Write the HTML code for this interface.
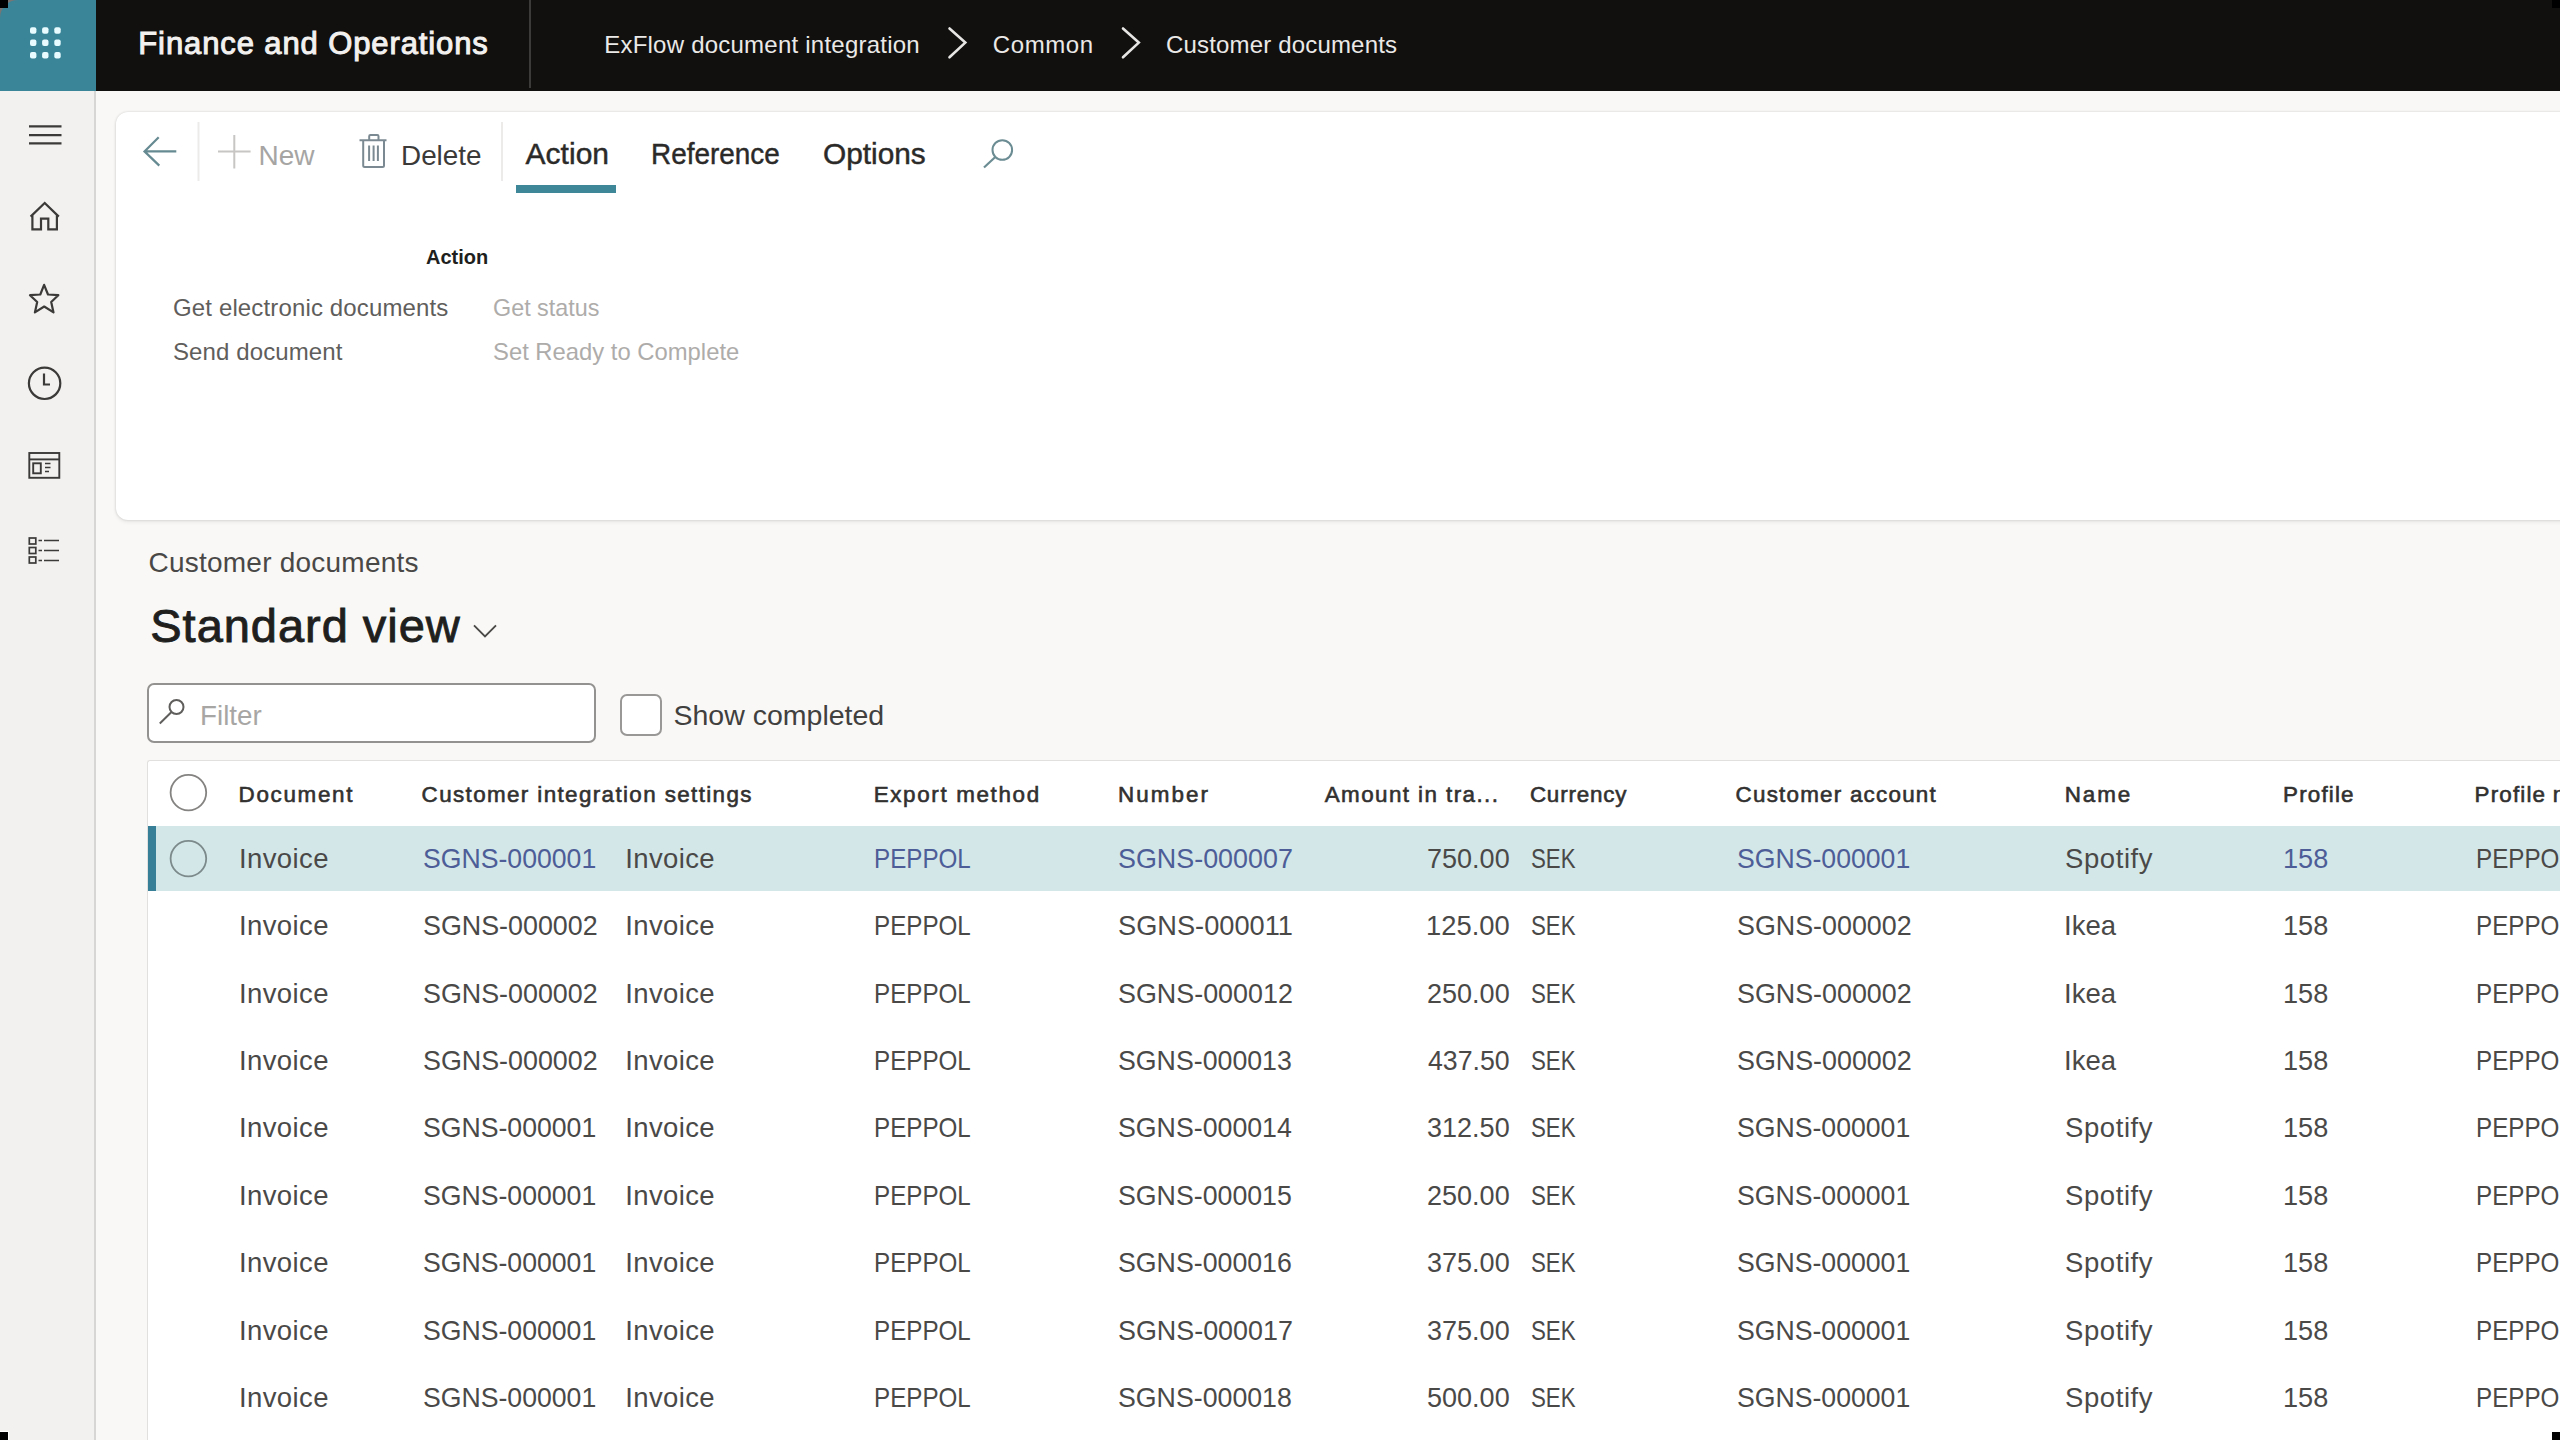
<!DOCTYPE html>
<html><head><meta charset="utf-8"><title>Customer documents</title>
<style>
html,body{margin:0;padding:0;width:2560px;height:1440px;overflow:hidden;background:#f9f8f6;font-family:"Liberation Sans",sans-serif;}
.a{position:absolute;}
.t{position:absolute;white-space:nowrap;line-height:1;transform-origin:0 0;font-family:"Liberation Sans",sans-serif;}
svg{position:absolute;overflow:visible;}
</style></head><body>
<!-- header -->
<div class="a" style="left:0;top:0;width:2560px;height:91px;background:#11100f"></div>
<div class="a" style="left:0;top:0;width:20px;height:20px;background:#7a7572"></div>
<div class="a" style="left:0;top:0;width:96px;height:91px;background:#3b8599;border-top-left-radius:18px"></div>
<svg style="left:0;top:0" width="96" height="91">
 <g fill="#e8fcff">
  <rect x="30" y="27.3" width="6.4" height="6.4" rx="2"/><rect x="42.1" y="27.3" width="6.4" height="6.4" rx="2"/><rect x="54.3" y="27.3" width="6.4" height="6.4" rx="2"/>
  <rect x="30" y="39.5" width="6.4" height="6.4" rx="2"/><rect x="42.1" y="39.5" width="6.4" height="6.4" rx="2"/><rect x="54.3" y="39.5" width="6.4" height="6.4" rx="2"/>
  <rect x="30" y="52" width="6.4" height="6.4" rx="2"/><rect x="42.1" y="52" width="6.4" height="6.4" rx="2"/><rect x="54.3" y="52" width="6.4" height="6.4" rx="2"/>
 </g>
</svg>
<div class="a" style="left:529px;top:0;width:2px;height:88px;background:#3c3b3a"></div>
<svg style="left:0;top:0" width="2560" height="91">
 <polyline points="949.5,28.5 965.3,42.6 949.5,57.3" fill="none" stroke="#e8e6e4" stroke-width="2.6" stroke-linecap="round"/>
 <polyline points="1123,28.5 1138.8,42.6 1123,57.3" fill="none" stroke="#e8e6e4" stroke-width="2.6" stroke-linecap="round"/>
</svg>
<!-- nav -->
<div class="a" style="left:0;top:91px;width:94px;height:1349px;background:#f2f1ef;border-right:2px solid #d8d6d4"></div>
<svg style="left:0;top:91px" width="94" height="500" fill="none" stroke="#3b3a39" stroke-width="2.2">
 <line x1="29" y1="35.4" x2="61.5" y2="35.4"/><line x1="29" y1="44.1" x2="61.5" y2="44.1"/><line x1="29" y1="52.4" x2="61.5" y2="52.4"/>
 <path d="M30.6 125.6 L44.7 112 L58.8 125.6 M32.4 123.6 V138.4 H41 V127.6 H48.3 V138.4 H56.9 V123.6" stroke-linejoin="miter"/>
 <path d="M44.1 193.8 L48 203.5 L58.3 204.2 L51.2 211 L53.5 221.4 L44.2 215.5 L34.9 221.4 L37.2 211 L30 204.2 L40.3 203.5 Z" stroke-linejoin="round"/>
 <circle cx="44.6" cy="292.3" r="15.7"/>
 <path d="M44 282.5 V293.5 H50"/>
 <g stroke-width="1.9"><rect x="29.3" y="362" width="30" height="24.8" />
 <line x1="29.3" y1="368.4" x2="59.3" y2="368.4"/>
 <rect x="33.2" y="372.3" width="7.6" height="10" /></g>
 <path d="M45 372.5 H50.5 M45 376.5 H50.5 M45 380.5 H49" stroke-width="1.6"/>
 <rect x="29.3" y="447" width="6.5" height="6" stroke-width="1.7"/>
 <rect x="29.3" y="456.5" width="6.5" height="6" stroke-width="1.7"/>
 <rect x="29.3" y="466" width="6.5" height="6" stroke-width="1.7"/>
 <path d="M38.5 449.5 H42 M44 449.5 H59 M38.5 459.5 H42 M44 459.5 H59 M38.5 469.5 H42 M44 469.5 H59" stroke-width="1.7"/>
</svg>
<!-- action card -->
<div class="a" style="left:116px;top:112px;width:2500px;height:408px;background:#fff;border-radius:12px;box-shadow:0 0 2.5px rgba(0,0,0,0.16),0 2px 4px rgba(0,0,0,0.07)"></div>
<svg style="left:0;top:0" width="1100" height="520" fill="none">
 <path d="M144.5 151.4 H176.3 M158.7 137.3 L144.5 151.4 L159.3 165.6" stroke="#668a91" stroke-width="2.2"/>
 <line x1="198.5" y1="122" x2="198.5" y2="181" stroke="#ecebea" stroke-width="2"/>
 <path d="M234.3 135 V168.5 M218 151.5 H250.6" stroke="#c8c6c4" stroke-width="2"/>
 <path d="M359.5 140.2 H386.5 M369.2 140 V136.2 Q369.2 135 370.4 135 H377.3 Q378.5 135 378.5 136.2 V140 M363.2 140.5 V165.5 Q363.2 167 364.7 167 H382.5 Q384 167 384 165.5 V140.5 M369.1 145.5 V161 M373.6 145.5 V161 M377.9 145.5 V161" stroke="#7b8a92" stroke-width="2"/>
 <line x1="502" y1="122" x2="502" y2="181" stroke="#ecebea" stroke-width="2"/>
 <circle cx="1002.3" cy="150" r="9.8" stroke="#6b8c93" stroke-width="2"/>
 <line x1="995.3" y1="157" x2="984" y2="167.5" stroke="#6b8c93" stroke-width="2.2"/>
</svg>
<div class="a" style="left:516px;top:184.5px;width:100px;height:8.5px;background:#3e8798"></div>
<svg style="left:0;top:0" width="600" height="700" fill="none"><polyline points="474,625.3 485,636.3 496,625.3" stroke="#4a4948" stroke-width="1.9"/></svg>
<!-- filter -->
<div class="a" style="left:147px;top:683px;width:445px;height:56px;background:#fff;border:2px solid #949290;border-radius:7px"></div>
<svg style="left:0;top:0" width="700" height="760" fill="none" stroke="#5f5e5c" stroke-width="2">
 <circle cx="176.5" cy="707" r="7"/>
 <line x1="171.5" y1="712" x2="159.8" y2="723.5"/>
</svg>
<div class="a" style="left:620px;top:693.5px;width:38px;height:38.7px;background:#fff;border:2px solid #9a9896;border-radius:7px"></div>
<!-- grid -->
<div class="a" style="left:147px;top:760px;width:2500px;height:700px;background:#fff;border-top:1px solid #e2e0de;border-left:1px solid #e2e0de;border-top-left-radius:3px"></div>
<div class="a" style="left:148px;top:826px;width:2420px;height:65px;background:#d3e7e8"></div>
<div class="a" style="left:148px;top:826px;width:8px;height:65px;background:#367f96"></div>
<svg style="left:0;top:0" width="300" height="900" fill="none" stroke-width="1.8">
 <circle cx="188.4" cy="792.6" r="17.8" stroke="#858381"/>
 <circle cx="188.4" cy="858.6" r="17.8" stroke="#7d8a8b"/>
</svg>
<div class="t" style="left:138.3px;top:27.8px;font-size:31px;color:#f3f1ef;letter-spacing:0.89px;-webkit-text-stroke:1.0px #f3f1ef">Finance and Operations</div>
<div class="t" style="left:604.2px;top:32.9px;font-size:24px;color:#ebe9e7;letter-spacing:0.23px">ExFlow document integration</div>
<div class="t" style="left:992.8px;top:32.9px;font-size:24px;color:#ebe9e7;letter-spacing:0.60px">Common</div>
<div class="t" style="left:1166.0px;top:32.9px;font-size:24px;color:#ebe9e7;letter-spacing:0.17px">Customer documents</div>
<div class="t" style="left:258.5px;top:142.0px;font-size:28px;color:#a6a5a4">New</div>
<div class="t" style="left:400.5px;top:142.0px;font-size:28px;color:#3b3a39;transform:scaleX(0.9953)">Delete</div>
<div class="t" style="left:525.5px;top:139.0px;font-size:30px;color:#2b2a29;letter-spacing:0.03px;-webkit-text-stroke:0.45px #2b2a29">Action</div>
<div class="t" style="left:651.2px;top:139.0px;font-size:30px;color:#2b2a29;transform:scaleX(0.9297);-webkit-text-stroke:0.45px #2b2a29">Reference</div>
<div class="t" style="left:823.0px;top:139.0px;font-size:30px;color:#2b2a29;transform:scaleX(0.9937);-webkit-text-stroke:0.45px #2b2a29">Options</div>
<div class="t" style="left:426.0px;top:247.1px;font-size:20px;color:#201f1e;font-weight:700">Action</div>
<div class="t" style="left:173.0px;top:296.1px;font-size:24px;color:#5f5e5c;letter-spacing:0.14px">Get electronic documents</div>
<div class="t" style="left:173.0px;top:340.2px;font-size:24px;color:#5f5e5c;letter-spacing:0.11px">Send document</div>
<div class="t" style="left:493.0px;top:296.1px;font-size:24px;color:#aeacaa;transform:scaleX(0.9725)">Get status</div>
<div class="t" style="left:493.0px;top:340.2px;font-size:24px;color:#aeacaa;transform:scaleX(0.9924)">Set Ready to Complete</div>
<div class="t" style="left:148.5px;top:548.5px;font-size:28px;color:#4a4847;letter-spacing:0.23px">Customer documents</div>
<div class="t" style="left:150.3px;top:601.9px;font-size:47px;color:#201f1e;letter-spacing:0.97px;-webkit-text-stroke:0.9px #201f1e">Standard view</div>
<div class="t" style="left:200.0px;top:701.2px;font-size:28.5px;color:#a8a6a4;transform:scaleX(0.9751)">Filter</div>
<div class="t" style="left:673.4px;top:701.2px;font-size:28.5px;color:#41403f;letter-spacing:0.01px">Show completed</div>
<div class="t" style="left:238.6px;top:784.2px;font-size:22.4px;color:#323130;letter-spacing:1.68px;-webkit-text-stroke:0.6px #323130">Document</div>
<div class="t" style="left:421.6px;top:784.2px;font-size:22.4px;color:#323130;letter-spacing:1.38px;-webkit-text-stroke:0.6px #323130">Customer integration settings</div>
<div class="t" style="left:873.7px;top:784.2px;font-size:22.4px;color:#323130;letter-spacing:1.65px;-webkit-text-stroke:0.6px #323130">Export method</div>
<div class="t" style="left:1118.1px;top:784.2px;font-size:22.4px;color:#323130;letter-spacing:2.04px;-webkit-text-stroke:0.6px #323130">Number</div>
<div class="t" style="left:1324.7px;top:784.2px;font-size:22.4px;color:#323130;letter-spacing:1.43px;-webkit-text-stroke:0.6px #323130">Amount in tra...</div>
<div class="t" style="left:1529.9px;top:784.2px;font-size:22.4px;color:#323130;letter-spacing:0.81px;-webkit-text-stroke:0.6px #323130">Currency</div>
<div class="t" style="left:1735.6px;top:784.2px;font-size:22.4px;color:#323130;letter-spacing:1.23px;-webkit-text-stroke:0.6px #323130">Customer account</div>
<div class="t" style="left:2064.8px;top:784.2px;font-size:22.4px;color:#323130;letter-spacing:1.88px;-webkit-text-stroke:0.6px #323130">Name</div>
<div class="t" style="left:2283.1px;top:784.2px;font-size:22.4px;color:#323130;letter-spacing:1.15px;-webkit-text-stroke:0.6px #323130">Profile</div>
<div class="t" style="left:2474.6px;top:784.2px;font-size:22.4px;color:#323130;letter-spacing:1.15px;-webkit-text-stroke:0.6px #323130">Profile</div>
<div class="t" style="left:2552.7px;top:784.2px;font-size:22.4px;color:#323130;-webkit-text-stroke:0.6px #323130">n</div>
<div class="t" style="left:239.0px;top:844.7px;font-size:27.5px;color:#4a4948;letter-spacing:0.39px">Invoice</div>
<div class="t" style="left:422.6px;top:844.7px;font-size:27.5px;color:#4d5d97;transform:scaleX(0.9685)">SGNS-000001</div>
<div class="t" style="left:625.2px;top:844.7px;font-size:27.5px;color:#4a4948;letter-spacing:0.39px">Invoice</div>
<div class="t" style="left:874.1px;top:844.7px;font-size:27.5px;color:#4d5d97;transform:scaleX(0.8797)">PEPPOL</div>
<div class="t" style="left:1118.4px;top:844.7px;font-size:27.5px;color:#4d5d97;transform:scaleX(0.9776)">SGNS-000007</div>
<div class="t" style="left:1427.0px;top:844.7px;font-size:27.5px;color:#4a4948;transform:scaleX(0.9829)">750.00</div>
<div class="t" style="left:1531.2px;top:844.7px;font-size:27.5px;color:#4a4948;transform:scaleX(0.8101)">SEK</div>
<div class="t" style="left:1736.6px;top:844.7px;font-size:27.5px;color:#4d5d97;transform:scaleX(0.9685)">SGNS-000001</div>
<div class="t" style="left:2065.0px;top:844.7px;font-size:27.5px;color:#4a4948;letter-spacing:0.58px">Spotify</div>
<div class="t" style="left:2283.0px;top:844.7px;font-size:27.5px;color:#4d5d97;transform:scaleX(0.9865)">158</div>
<div class="t" style="left:2476.2px;top:844.7px;font-size:27.5px;color:#4a4948;transform:scaleX(0.8797)">PEPPOL</div>
<div class="t" style="left:239.0px;top:912.1px;font-size:27.5px;color:#4a4948;letter-spacing:0.39px">Invoice</div>
<div class="t" style="left:422.6px;top:912.1px;font-size:27.5px;color:#4a4948;transform:scaleX(0.9764)">SGNS-000002</div>
<div class="t" style="left:625.2px;top:912.1px;font-size:27.5px;color:#4a4948;letter-spacing:0.39px">Invoice</div>
<div class="t" style="left:874.1px;top:912.1px;font-size:27.5px;color:#4a4948;transform:scaleX(0.8797)">PEPPOL</div>
<div class="t" style="left:1118.4px;top:912.1px;font-size:27.5px;color:#4a4948;transform:scaleX(0.9890)">SGNS-000011</div>
<div class="t" style="left:1426.0px;top:912.1px;font-size:27.5px;color:#4a4948;transform:scaleX(0.9949)">125.00</div>
<div class="t" style="left:1531.2px;top:912.1px;font-size:27.5px;color:#4a4948;transform:scaleX(0.8101)">SEK</div>
<div class="t" style="left:1736.6px;top:912.1px;font-size:27.5px;color:#4a4948;transform:scaleX(0.9764)">SGNS-000002</div>
<div class="t" style="left:2064.0px;top:912.1px;font-size:27.5px;color:#4a4948">Ikea</div>
<div class="t" style="left:2283.0px;top:912.1px;font-size:27.5px;color:#4a4948;transform:scaleX(0.9865)">158</div>
<div class="t" style="left:2476.2px;top:912.1px;font-size:27.5px;color:#4a4948;transform:scaleX(0.8797)">PEPPOL</div>
<div class="t" style="left:239.0px;top:979.5px;font-size:27.5px;color:#4a4948;letter-spacing:0.39px">Invoice</div>
<div class="t" style="left:422.6px;top:979.5px;font-size:27.5px;color:#4a4948;transform:scaleX(0.9764)">SGNS-000002</div>
<div class="t" style="left:625.2px;top:979.5px;font-size:27.5px;color:#4a4948;letter-spacing:0.39px">Invoice</div>
<div class="t" style="left:874.1px;top:979.5px;font-size:27.5px;color:#4a4948;transform:scaleX(0.8797)">PEPPOL</div>
<div class="t" style="left:1118.4px;top:979.5px;font-size:27.5px;color:#4a4948;transform:scaleX(0.9776)">SGNS-000012</div>
<div class="t" style="left:1427.0px;top:979.5px;font-size:27.5px;color:#4a4948;transform:scaleX(0.9829)">250.00</div>
<div class="t" style="left:1531.2px;top:979.5px;font-size:27.5px;color:#4a4948;transform:scaleX(0.8101)">SEK</div>
<div class="t" style="left:1736.6px;top:979.5px;font-size:27.5px;color:#4a4948;transform:scaleX(0.9764)">SGNS-000002</div>
<div class="t" style="left:2064.0px;top:979.5px;font-size:27.5px;color:#4a4948">Ikea</div>
<div class="t" style="left:2283.0px;top:979.5px;font-size:27.5px;color:#4a4948;transform:scaleX(0.9865)">158</div>
<div class="t" style="left:2476.2px;top:979.5px;font-size:27.5px;color:#4a4948;transform:scaleX(0.8797)">PEPPOL</div>
<div class="t" style="left:239.0px;top:1046.9px;font-size:27.5px;color:#4a4948;letter-spacing:0.39px">Invoice</div>
<div class="t" style="left:422.6px;top:1046.9px;font-size:27.5px;color:#4a4948;transform:scaleX(0.9764)">SGNS-000002</div>
<div class="t" style="left:625.2px;top:1046.9px;font-size:27.5px;color:#4a4948;letter-spacing:0.39px">Invoice</div>
<div class="t" style="left:874.1px;top:1046.9px;font-size:27.5px;color:#4a4948;transform:scaleX(0.8797)">PEPPOL</div>
<div class="t" style="left:1118.4px;top:1046.9px;font-size:27.5px;color:#4a4948;transform:scaleX(0.9720)">SGNS-000013</div>
<div class="t" style="left:1428.0px;top:1046.9px;font-size:27.5px;color:#4a4948;transform:scaleX(0.9712)">437.50</div>
<div class="t" style="left:1531.2px;top:1046.9px;font-size:27.5px;color:#4a4948;transform:scaleX(0.8101)">SEK</div>
<div class="t" style="left:1736.6px;top:1046.9px;font-size:27.5px;color:#4a4948;transform:scaleX(0.9764)">SGNS-000002</div>
<div class="t" style="left:2064.0px;top:1046.9px;font-size:27.5px;color:#4a4948">Ikea</div>
<div class="t" style="left:2283.0px;top:1046.9px;font-size:27.5px;color:#4a4948;transform:scaleX(0.9865)">158</div>
<div class="t" style="left:2476.2px;top:1046.9px;font-size:27.5px;color:#4a4948;transform:scaleX(0.8797)">PEPPOL</div>
<div class="t" style="left:239.0px;top:1114.4px;font-size:27.5px;color:#4a4948;letter-spacing:0.39px">Invoice</div>
<div class="t" style="left:422.6px;top:1114.4px;font-size:27.5px;color:#4a4948;transform:scaleX(0.9685)">SGNS-000001</div>
<div class="t" style="left:625.2px;top:1114.4px;font-size:27.5px;color:#4a4948;letter-spacing:0.39px">Invoice</div>
<div class="t" style="left:874.1px;top:1114.4px;font-size:27.5px;color:#4a4948;transform:scaleX(0.8797)">PEPPOL</div>
<div class="t" style="left:1118.4px;top:1114.4px;font-size:27.5px;color:#4a4948;transform:scaleX(0.9720)">SGNS-000014</div>
<div class="t" style="left:1427.0px;top:1114.4px;font-size:27.5px;color:#4a4948;transform:scaleX(0.9829)">312.50</div>
<div class="t" style="left:1531.2px;top:1114.4px;font-size:27.5px;color:#4a4948;transform:scaleX(0.8101)">SEK</div>
<div class="t" style="left:1736.6px;top:1114.4px;font-size:27.5px;color:#4a4948;transform:scaleX(0.9685)">SGNS-000001</div>
<div class="t" style="left:2065.0px;top:1114.4px;font-size:27.5px;color:#4a4948;letter-spacing:0.58px">Spotify</div>
<div class="t" style="left:2283.0px;top:1114.4px;font-size:27.5px;color:#4a4948;transform:scaleX(0.9865)">158</div>
<div class="t" style="left:2476.2px;top:1114.4px;font-size:27.5px;color:#4a4948;transform:scaleX(0.8797)">PEPPOL</div>
<div class="t" style="left:239.0px;top:1181.8px;font-size:27.5px;color:#4a4948;letter-spacing:0.39px">Invoice</div>
<div class="t" style="left:422.6px;top:1181.8px;font-size:27.5px;color:#4a4948;transform:scaleX(0.9685)">SGNS-000001</div>
<div class="t" style="left:625.2px;top:1181.8px;font-size:27.5px;color:#4a4948;letter-spacing:0.39px">Invoice</div>
<div class="t" style="left:874.1px;top:1181.8px;font-size:27.5px;color:#4a4948;transform:scaleX(0.8797)">PEPPOL</div>
<div class="t" style="left:1118.4px;top:1181.8px;font-size:27.5px;color:#4a4948;transform:scaleX(0.9720)">SGNS-000015</div>
<div class="t" style="left:1427.0px;top:1181.8px;font-size:27.5px;color:#4a4948;transform:scaleX(0.9829)">250.00</div>
<div class="t" style="left:1531.2px;top:1181.8px;font-size:27.5px;color:#4a4948;transform:scaleX(0.8101)">SEK</div>
<div class="t" style="left:1736.6px;top:1181.8px;font-size:27.5px;color:#4a4948;transform:scaleX(0.9685)">SGNS-000001</div>
<div class="t" style="left:2065.0px;top:1181.8px;font-size:27.5px;color:#4a4948;letter-spacing:0.58px">Spotify</div>
<div class="t" style="left:2283.0px;top:1181.8px;font-size:27.5px;color:#4a4948;transform:scaleX(0.9865)">158</div>
<div class="t" style="left:2476.2px;top:1181.8px;font-size:27.5px;color:#4a4948;transform:scaleX(0.8797)">PEPPOL</div>
<div class="t" style="left:239.0px;top:1249.2px;font-size:27.5px;color:#4a4948;letter-spacing:0.39px">Invoice</div>
<div class="t" style="left:422.6px;top:1249.2px;font-size:27.5px;color:#4a4948;transform:scaleX(0.9685)">SGNS-000001</div>
<div class="t" style="left:625.2px;top:1249.2px;font-size:27.5px;color:#4a4948;letter-spacing:0.39px">Invoice</div>
<div class="t" style="left:874.1px;top:1249.2px;font-size:27.5px;color:#4a4948;transform:scaleX(0.8797)">PEPPOL</div>
<div class="t" style="left:1118.4px;top:1249.2px;font-size:27.5px;color:#4a4948;transform:scaleX(0.9720)">SGNS-000016</div>
<div class="t" style="left:1427.0px;top:1249.2px;font-size:27.5px;color:#4a4948;transform:scaleX(0.9829)">375.00</div>
<div class="t" style="left:1531.2px;top:1249.2px;font-size:27.5px;color:#4a4948;transform:scaleX(0.8101)">SEK</div>
<div class="t" style="left:1736.6px;top:1249.2px;font-size:27.5px;color:#4a4948;transform:scaleX(0.9685)">SGNS-000001</div>
<div class="t" style="left:2065.0px;top:1249.2px;font-size:27.5px;color:#4a4948;letter-spacing:0.58px">Spotify</div>
<div class="t" style="left:2283.0px;top:1249.2px;font-size:27.5px;color:#4a4948;transform:scaleX(0.9865)">158</div>
<div class="t" style="left:2476.2px;top:1249.2px;font-size:27.5px;color:#4a4948;transform:scaleX(0.8797)">PEPPOL</div>
<div class="t" style="left:239.0px;top:1316.6px;font-size:27.5px;color:#4a4948;letter-spacing:0.39px">Invoice</div>
<div class="t" style="left:422.6px;top:1316.6px;font-size:27.5px;color:#4a4948;transform:scaleX(0.9685)">SGNS-000001</div>
<div class="t" style="left:625.2px;top:1316.6px;font-size:27.5px;color:#4a4948;letter-spacing:0.39px">Invoice</div>
<div class="t" style="left:874.1px;top:1316.6px;font-size:27.5px;color:#4a4948;transform:scaleX(0.8797)">PEPPOL</div>
<div class="t" style="left:1118.4px;top:1316.6px;font-size:27.5px;color:#4a4948;transform:scaleX(0.9776)">SGNS-000017</div>
<div class="t" style="left:1427.0px;top:1316.6px;font-size:27.5px;color:#4a4948;transform:scaleX(0.9829)">375.00</div>
<div class="t" style="left:1531.2px;top:1316.6px;font-size:27.5px;color:#4a4948;transform:scaleX(0.8101)">SEK</div>
<div class="t" style="left:1736.6px;top:1316.6px;font-size:27.5px;color:#4a4948;transform:scaleX(0.9685)">SGNS-000001</div>
<div class="t" style="left:2065.0px;top:1316.6px;font-size:27.5px;color:#4a4948;letter-spacing:0.58px">Spotify</div>
<div class="t" style="left:2283.0px;top:1316.6px;font-size:27.5px;color:#4a4948;transform:scaleX(0.9865)">158</div>
<div class="t" style="left:2476.2px;top:1316.6px;font-size:27.5px;color:#4a4948;transform:scaleX(0.8797)">PEPPOL</div>
<div class="t" style="left:239.0px;top:1384.0px;font-size:27.5px;color:#4a4948;letter-spacing:0.39px">Invoice</div>
<div class="t" style="left:422.6px;top:1384.0px;font-size:27.5px;color:#4a4948;transform:scaleX(0.9685)">SGNS-000001</div>
<div class="t" style="left:625.2px;top:1384.0px;font-size:27.5px;color:#4a4948;letter-spacing:0.39px">Invoice</div>
<div class="t" style="left:874.1px;top:1384.0px;font-size:27.5px;color:#4a4948;transform:scaleX(0.8797)">PEPPOL</div>
<div class="t" style="left:1118.4px;top:1384.0px;font-size:27.5px;color:#4a4948;transform:scaleX(0.9720)">SGNS-000018</div>
<div class="t" style="left:1427.0px;top:1384.0px;font-size:27.5px;color:#4a4948;transform:scaleX(0.9829)">500.00</div>
<div class="t" style="left:1531.2px;top:1384.0px;font-size:27.5px;color:#4a4948;transform:scaleX(0.8101)">SEK</div>
<div class="t" style="left:1736.6px;top:1384.0px;font-size:27.5px;color:#4a4948;transform:scaleX(0.9685)">SGNS-000001</div>
<div class="t" style="left:2065.0px;top:1384.0px;font-size:27.5px;color:#4a4948;letter-spacing:0.58px">Spotify</div>
<div class="t" style="left:2283.0px;top:1384.0px;font-size:27.5px;color:#4a4948;transform:scaleX(0.9865)">158</div>
<div class="t" style="left:2476.2px;top:1384.0px;font-size:27.5px;color:#4a4948;transform:scaleX(0.8797)">PEPPOL</div>
<!-- corners -->
<div class="a" style="left:0;top:0;width:8px;height:8px;background:#000"></div>
<div class="a" style="left:2552px;top:0;width:8px;height:8px;background:#000"></div>
<div class="a" style="left:0;top:1431px;width:9px;height:9px;background:#fff"></div>
<div class="a" style="left:0;top:1432px;width:8px;height:8px;background:#000"></div>
<div class="a" style="left:2552px;top:1432px;width:8px;height:8px;background:#000"></div>
</body></html>
